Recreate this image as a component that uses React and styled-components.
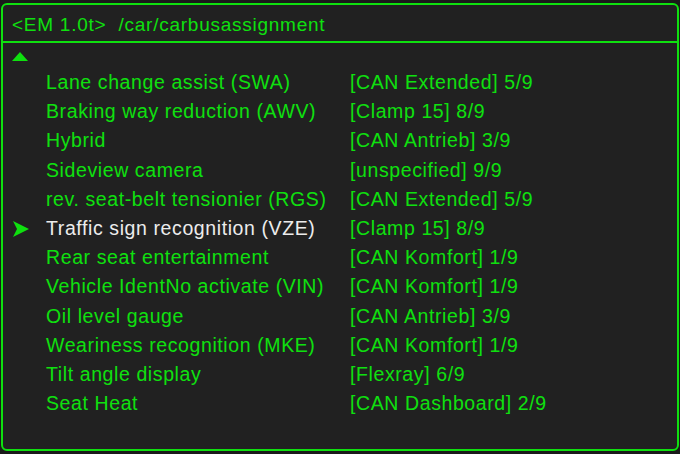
import React from "react";
import styled, { createGlobalStyle } from "styled-components";

const green = "#0fe00f";

const GlobalStyle = createGlobalStyle`
  html, body {
    margin: 0;
    padding: 0;
    background: #1a1a1a;
  }
`;

const Frame = styled.div`
  box-sizing: border-box;
  margin: 3px 1px 0 1px;
  width: 678px;
  height: 448px;
  border: 2px solid ${green};
  border-radius: 6px;
  background: #212121;
  display: flex;
  flex-direction: column;
  font-family: "Liberation Sans", Arial, sans-serif;
  color: ${green};
  overflow: hidden;
`;

const Header = styled.div`
  box-sizing: border-box;
  height: 38px;
  display: flex;
  align-items: center;
  padding: 3px 0 0 9px;
  font-size: 19px;
  letter-spacing: 0.75px;
  border-bottom: 2px solid ${green};
  white-space: pre;
`;

const List = styled.div`
  display: flex;
  flex-direction: column;
  padding: 9px 0 0 8px;
`;

const ScrollUp = styled.div`
  width: 0;
  height: 0;
  margin-left: 1px;
  border-left: 8px solid transparent;
  border-right: 8px solid transparent;
  border-bottom: 9px solid ${green};
  margin-bottom: 7px;
`;

const Row = styled.div`
  display: grid;
  grid-template-columns: 35px 304px 1fr;
  align-items: center;
  height: 29.2px;
  font-size: 19.5px;
  letter-spacing: 0.6px;
  color: ${(p) => (p.$active ? "#ececec" : green)};
  white-space: nowrap;
`;

const Bus = styled.span`
  color: ${green};
`;

const Marker = styled.svg`
  width: 17px;
  height: 16px;
  display: block;
  margin-left: 1px;
`;

const rows = [
  ["Lane change assist (SWA)", "[CAN Extended] 5/9"],
  ["Braking way reduction (AWV)", "[Clamp 15] 8/9"],
  ["Hybrid", "[CAN Antrieb] 3/9"],
  ["Sideview camera", "[unspecified] 9/9"],
  ["rev. seat-belt tensionier (RGS)", "[CAN Extended] 5/9"],
  ["Traffic sign recognition (VZE)", "[Clamp 15] 8/9", true],
  ["Rear seat entertainment", "[CAN Komfort] 1/9"],
  ["Vehicle IdentNo activate (VIN)", "[CAN Komfort] 1/9"],
  ["Oil level gauge", "[CAN Antrieb] 3/9"],
  ["Weariness recognition (MKE)", "[CAN Komfort] 1/9"],
  ["Tilt angle display", "[Flexray] 6/9"],
  ["Seat Heat", "[CAN Dashboard] 2/9"],
];

export default function App() {
  return (
    <>
      <GlobalStyle />
      <Frame>
        <Header>{"<EM 1.0t>  /car/carbusassignment"}</Header>
        <List>
          <ScrollUp />
          {rows.map(([name, bus, active]) => (
            <Row key={name} $active={active}>
              <span>
                {active && (
                  <Marker viewBox="0 0 17 16">
                    <path d="M1 0 L17 8 L1 16 L5 8 Z" fill={green} />
                  </Marker>
                )}
              </span>
              <span>{name}</span>
              <Bus>{bus}</Bus>
            </Row>
          ))}
        </List>
      </Frame>
    </>
  );
}
